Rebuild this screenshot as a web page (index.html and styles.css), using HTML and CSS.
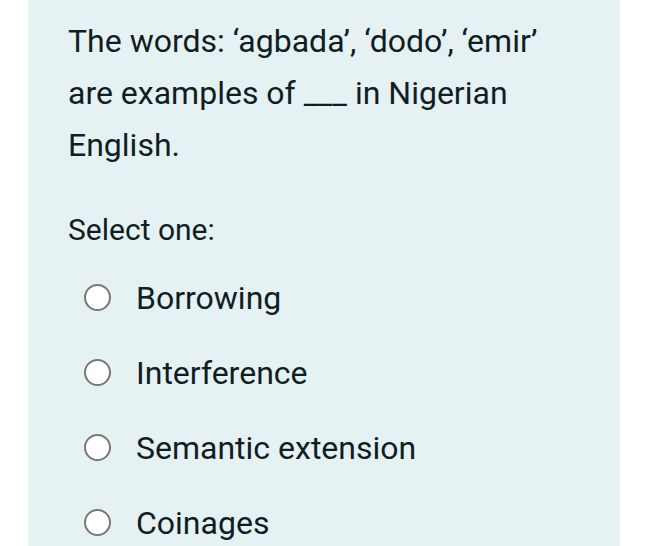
FILE: index.html
```html
<!DOCTYPE html>
<html>
<head>
<meta charset="utf-8">
<link rel="stylesheet" href="styles.css">
</head>
<body>
<div class="panel">
  <p class="question">The words: ‘agbada’, ‘dodo’, ‘emir’ are examples of ___ in Nigerian English.</p>
  <p class="prompt">Select one:</p>
  <div class="options">
    <label class="option"><span class="radio"></span><span class="label">Borrowing</span></label>
    <label class="option"><span class="radio"></span><span class="label">Interference</span></label>
    <label class="option"><span class="radio"></span><span class="label">Semantic extension</span></label>
    <label class="option"><span class="radio"></span><span class="label">Coinages</span></label>
  </div>
</div>
</body>
</html>
```
FILE: styles.css
```css
html, body {
  margin: 0;
  padding: 0;
  background: #ffffff;
  height: 100%;
}
body {
  font-family: Roboto, "Noto Sans", sans-serif;
  color: #0f1e22;
  overflow: hidden;
}
.panel {
  margin-left: 28px;
  width: 592px;
  min-height: 100%;
  background: #e6f1f4;
  box-sizing: border-box;
  padding: 15px 40px 0 40px;
}
.question {
  margin: 0;
  font-size: 32px;
  line-height: 52px;
  width: 480px;
}
.prompt {
  margin: 39px 0 0 0;
  font-size: 30px;
  line-height: 40px;
}
.options {
  display: flex;
  flex-direction: column;
  margin-top: 10px;
}
.option {
  display: flex;
  align-items: center;
  height: 75px;
  font-size: 32px;
}
.radio {
  width: 23px;
  height: 23px;
  border: 2px solid #777777;
  border-radius: 50%;
  background: #ffffff;
  margin-left: 16px;
  margin-right: 25px;
  flex: none;
}
```
